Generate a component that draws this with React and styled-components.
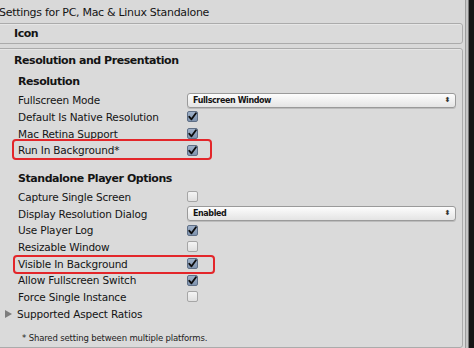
import styled, { createGlobalStyle } from "styled-components";

const GlobalStyle = createGlobalStyle`
  html, body {
    margin: 0;
    padding: 0;
    background: #d9d9d9;
    overflow: hidden;
  }
  body {
    font-family: "DejaVu Sans", "Liberation Sans", sans-serif;
    color: #141414;
  }
`;

const Window = styled.div`
  display: flex;
  width: 474px;
  height: 348px;
  overflow: hidden;
  background: #d9d9d9;
`;

const Main = styled.div`
  flex: 1;
  display: flex;
  flex-direction: column;
  gap: ${(p) => p.$gap}px;
  min-width: 0;
`;

const Edge = styled.div`
  width: 8px;
  display: flex;
  border-left: 1px solid #9c9c9c;
  background: #c6c6c6;
  &::after {
    content: "";
    margin-left: 2px;
    flex: 1;
    background: #161616;
    border-left: 1px solid #7a7a7a;
  }
`;

const Title = styled.div`
  height: 23px;
  line-height: 25px;
  margin-left: -1px;
  font-size: 11px;
  letter-spacing: -0.3px;
  white-space: nowrap;
  margin-bottom: ${(p) => -p.$gap}px;
`;

const Box = styled.section`
  margin: 0 2px 0 -4px;
  border: 1px solid #ababab;
  border-radius: 3px;
  background: #dadada;
  box-shadow: inset 0 1px 0 #e6e6e6;
  ${(p) => (p.$fill ? "flex: 1;" : "")}
`;

const BoxHeader = styled.div`
  height: ${(p) => p.$h}px;
  line-height: ${(p) => p.$h + 1}px;
  padding-left: 17px;
  font-size: 11px;
  font-weight: bold;
  letter-spacing: -0.45px;
`;

const SubHeader = styled.div`
  height: ${(p) => p.$h}px;
  line-height: ${(p) => p.$h}px;
  padding-left: 21px;
  font-size: 11px;
  font-weight: bold;
  letter-spacing: -0.45px;
  margin-top: ${(p) => p.$top || 0}px;
`;

const Row = styled.div`
  position: relative;
  display: grid;
  grid-template-columns: 169px 1fr;
  align-items: center;
  height: 16.67px;
  padding-left: ${(p) => (p.$foldout ? 8 : 21)}px;
  padding-right: 6px;
  font-size: 10.5px;
  letter-spacing: -0.18px;
  white-space: nowrap;
  ${(p) =>
    p.$marked &&
    `
    &::after {
      content: "";
      position: absolute;
      left: ${p.$mark.left}px;
      top: ${p.$mark.top}px;
      width: ${p.$mark.w}px;
      height: ${p.$mark.h}px;
      border: 2px solid #e3262a;
      border-radius: 4px;
      box-sizing: border-box;
    }
  `}
`;

const Label = styled.span`
  display: flex;
  align-items: center;
  gap: 2px;
`;

const Arrow = styled.span`
  width: 0;
  height: 0;
  border-top: 4.5px solid transparent;
  border-bottom: 4.5px solid transparent;
  border-left: 7px solid #7d7d7d;
  margin-right: 3px;
`;

const Check = styled.span`
  width: 11px;
  height: 11px;
  box-sizing: border-box;
  border-radius: 2px;
  border: 1px solid ${(p) => (p.$on ? "#5f6f86" : "#a6a6a6")};
  background: ${(p) =>
    p.$on
      ? "linear-gradient(#9eb0c8, #7f93ae)"
      : "linear-gradient(#f4f4f4, #e0e0e0)"};
  display: flex;
  align-items: center;
  justify-content: center;
  svg {
    display: block;
  }
`;

const Select = styled.div`
  display: flex;
  align-items: center;
  justify-content: space-between;
  height: 13px;
  padding: 0 5px 0 5px;
  border: 1px solid #9a9a9a;
  border-radius: 3px;
  background: linear-gradient(#fdfdfd, #e4e4e4);
  font-size: 8px;
  font-weight: bold;
  letter-spacing: -0.4px;
  box-shadow: 0 1px 0 #bcbcbc;
`;

const Spin = styled.span`
  font-size: 7px;
  line-height: 1;
  color: #333;
`;

const Footer = styled.div`
  margin-top: 9px;
  padding-left: 25px;
  font-size: 8.5px;
  letter-spacing: -0.15px;
  height: 14px;
  line-height: 14px;
  color: #222;
  white-space: nowrap;
`;

const Tick = () => (
  <svg width="9" height="9" viewBox="0 0 9 9">
    <path
      d="M1.3 4.8 L3.5 7.3 L7.9 1.2"
      fill="none"
      stroke="#0c0c0c"
      strokeWidth="1.8"
      strokeLinecap="round"
      strokeLinejoin="round"
    />
  </svg>
);

function Toggle({ on }) {
  return <Check $on={on}>{on && <Tick />}</Check>;
}

function Field({ children }) {
  return (
    <Select>
      <span>{children}</span>
      <Spin>⬍</Spin>
    </Select>
  );
}

const resolution = [
  { label: "Fullscreen Mode", select: "Fullscreen Window" },
  { label: "Default Is Native Resolution", on: true },
  { label: "Mac Retina Support", on: true },
  {
    label: "Run In Background*",
    on: true,
    mark: { left: 15, top: -3, w: 200, h: 21 },
  },
];

const standalone = [
  { label: "Capture Single Screen", on: false },
  { label: "Display Resolution Dialog", select: "Enabled" },
  { label: "Use Player Log", on: true },
  { label: "Resizable Window", on: false },
  {
    label: "Visible In Background",
    on: true,
    mark: { left: 16, top: 0, w: 202, h: 19 },
  },
  { label: "Allow Fullscreen Switch", on: true },
  { label: "Force Single Instance", on: false },
];

function SettingRow({ item }) {
  return (
    <Row $marked={!!item.mark} $mark={item.mark}>
      <Label>{item.label}</Label>
      {item.select ? <Field>{item.select}</Field> : <Toggle on={item.on} />}
    </Row>
  );
}

export default function App() {
  return (
    <>
      <GlobalStyle />
      <Window>
        <Main $gap={4}>
          <Title $gap={4}>Settings for PC, Mac &amp; Linux Standalone</Title>
          <Box>
            <BoxHeader $h={19}>Icon</BoxHeader>
          </Box>
          <Box $fill>
            <BoxHeader $h={22}>Resolution and Presentation</BoxHeader>
            <SubHeader $h={21}>Resolution</SubHeader>
            {resolution.map((it) => (
              <SettingRow key={it.label} item={it} />
            ))}
            <SubHeader $h={20} $top={10}>
              Standalone Player Options
            </SubHeader>
            {standalone.map((it) => (
              <SettingRow key={it.label} item={it} />
            ))}
            <Row $foldout>
              <Label>
                <Arrow />
                Supported Aspect Ratios
              </Label>
            </Row>
            <Footer>* Shared setting between multiple platforms.</Footer>
          </Box>
        </Main>
        <Edge />
      </Window>
    </>
  );
}
